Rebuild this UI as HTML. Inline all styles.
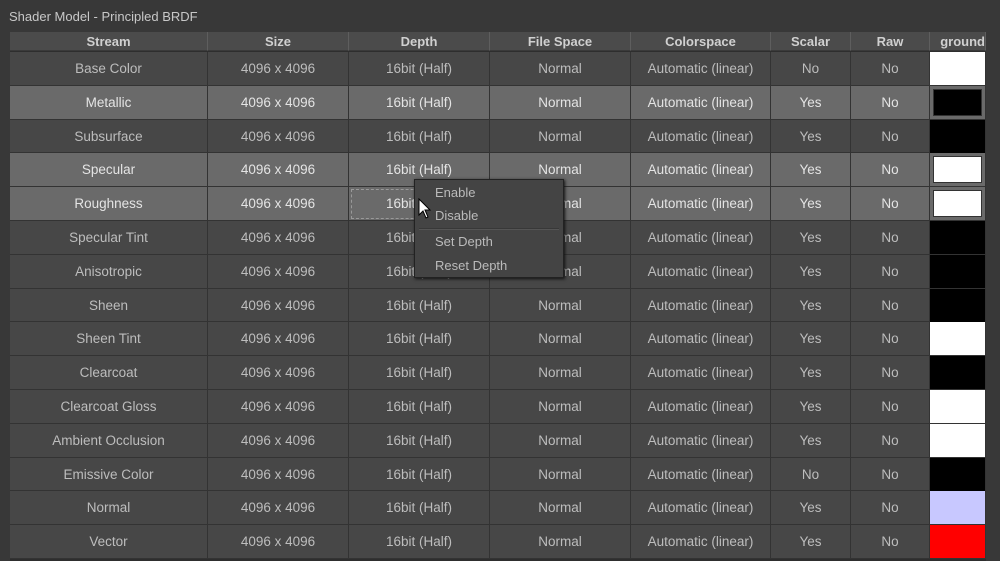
<!DOCTYPE html><html><head><style>
html,body{margin:0;width:1000px;height:561px;overflow:hidden}
body{background:#383838;font-family:"Liberation Sans","DejaVu Sans",sans-serif;position:relative}
.t{position:absolute;left:9px;top:9px;color:#c8c8c8;font-size:13px}
.tb{position:absolute;left:10px;top:32px;width:976px;height:529px;background:#2e2e2e}
.h,.r{position:absolute;left:0;height:20px;display:flex}
.h div{height:19px;line-height:19px;background:#4b4b4b;color:#d0d0d0;font-weight:bold;font-size:13px;text-align:center;border-right:1px solid #5e5e5e;box-sizing:border-box;border-bottom:1px solid #3a3a3a;overflow:hidden;white-space:nowrap}
.r{height:33.8px}
.r div{box-sizing:border-box;border-right:1px solid #333;border-bottom:1px solid #333;background:#474747;color:#bdbdbd;font-size:13.5px;line-height:33px;text-align:center;white-space:nowrap}
.r.s div{background:#6a6a6a;color:#e4e4e4}
.r div.sw{padding:0}
.r.s div.sw i{display:block;margin:3px 3px;height:25px;border:1px solid #333}
.r:not(.s) div.sw i{display:block;height:33px}
.c0{width:198px}.c1{width:141px}.c2{width:141px}.c3{width:141px}.c4{width:140px}.c5{width:80px}.c6{width:79px}.c7{width:56px}
.menu{position:absolute;left:414px;top:179px;width:148px;height:97px;background:#444;border:1px solid #222;box-shadow:1px 1px 3px #111;color:#bbb;font-size:13px}
.menu span{position:absolute;left:20px}
</style></head><body>
<div class="t">Shader Model - Principled BRDF</div>
<div class="tb">
<div class="h" style="top:0"><div class="c0">Stream</div><div class="c1">Size</div><div class="c2">Depth</div><div class="c3">File Space</div><div class="c4">Colorspace</div><div class="c5">Scalar</div><div class="c6">Raw</div><div class="c7" style="text-align:right">ground</div></div>
<div class="r" style="top:20px"><div class="c0">Base Color</div><div class="c1">4096 x 4096</div><div class="c2">16bit (Half)</div><div class="c3">Normal</div><div class="c4">Automatic (linear)</div><div class="c5">No</div><div class="c6">No</div><div class="c7 sw"><i style="background:#fff"></i></div></div>
<div class="r s" style="top:53.8px"><div class="c0">Metallic</div><div class="c1">4096 x 4096</div><div class="c2">16bit (Half)</div><div class="c3">Normal</div><div class="c4">Automatic (linear)</div><div class="c5">Yes</div><div class="c6">No</div><div class="c7 sw"><i style="background:#000"></i></div></div>
<div class="r" style="top:87.6px"><div class="c0">Subsurface</div><div class="c1">4096 x 4096</div><div class="c2">16bit (Half)</div><div class="c3">Normal</div><div class="c4">Automatic (linear)</div><div class="c5">Yes</div><div class="c6">No</div><div class="c7 sw"><i style="background:#000"></i></div></div>
<div class="r s" style="top:121.4px"><div class="c0">Specular</div><div class="c1">4096 x 4096</div><div class="c2">16bit (Half)</div><div class="c3">Normal</div><div class="c4">Automatic (linear)</div><div class="c5">Yes</div><div class="c6">No</div><div class="c7 sw"><i style="background:#fff"></i></div></div>
<div class="r s" style="top:155.2px"><div class="c0">Roughness</div><div class="c1">4096 x 4096</div><div class="c2" style="outline:1px dashed #999;outline-offset:-3px">16bit (Half)</div><div class="c3">Normal</div><div class="c4">Automatic (linear)</div><div class="c5">Yes</div><div class="c6">No</div><div class="c7 sw"><i style="background:#fff"></i></div></div>
<div class="r" style="top:189px"><div class="c0">Specular Tint</div><div class="c1">4096 x 4096</div><div class="c2">16bit (Half)</div><div class="c3">Normal</div><div class="c4">Automatic (linear)</div><div class="c5">Yes</div><div class="c6">No</div><div class="c7 sw"><i style="background:#000"></i></div></div>
<div class="r" style="top:222.8px"><div class="c0">Anisotropic</div><div class="c1">4096 x 4096</div><div class="c2">16bit (Half)</div><div class="c3">Normal</div><div class="c4">Automatic (linear)</div><div class="c5">Yes</div><div class="c6">No</div><div class="c7 sw"><i style="background:#000"></i></div></div>
<div class="r" style="top:256.6px"><div class="c0">Sheen</div><div class="c1">4096 x 4096</div><div class="c2">16bit (Half)</div><div class="c3">Normal</div><div class="c4">Automatic (linear)</div><div class="c5">Yes</div><div class="c6">No</div><div class="c7 sw"><i style="background:#000"></i></div></div>
<div class="r" style="top:290.4px"><div class="c0">Sheen Tint</div><div class="c1">4096 x 4096</div><div class="c2">16bit (Half)</div><div class="c3">Normal</div><div class="c4">Automatic (linear)</div><div class="c5">Yes</div><div class="c6">No</div><div class="c7 sw"><i style="background:#fff"></i></div></div>
<div class="r" style="top:324.2px"><div class="c0">Clearcoat</div><div class="c1">4096 x 4096</div><div class="c2">16bit (Half)</div><div class="c3">Normal</div><div class="c4">Automatic (linear)</div><div class="c5">Yes</div><div class="c6">No</div><div class="c7 sw"><i style="background:#000"></i></div></div>
<div class="r" style="top:358px"><div class="c0">Clearcoat Gloss</div><div class="c1">4096 x 4096</div><div class="c2">16bit (Half)</div><div class="c3">Normal</div><div class="c4">Automatic (linear)</div><div class="c5">Yes</div><div class="c6">No</div><div class="c7 sw"><i style="background:#fff"></i></div></div>
<div class="r" style="top:391.8px"><div class="c0">Ambient Occlusion</div><div class="c1">4096 x 4096</div><div class="c2">16bit (Half)</div><div class="c3">Normal</div><div class="c4">Automatic (linear)</div><div class="c5">Yes</div><div class="c6">No</div><div class="c7 sw"><i style="background:#fff"></i></div></div>
<div class="r" style="top:425.6px"><div class="c0">Emissive Color</div><div class="c1">4096 x 4096</div><div class="c2">16bit (Half)</div><div class="c3">Normal</div><div class="c4">Automatic (linear)</div><div class="c5">No</div><div class="c6">No</div><div class="c7 sw"><i style="background:#000"></i></div></div>
<div class="r" style="top:459.4px"><div class="c0">Normal</div><div class="c1">4096 x 4096</div><div class="c2">16bit (Half)</div><div class="c3">Normal</div><div class="c4">Automatic (linear)</div><div class="c5">Yes</div><div class="c6">No</div><div class="c7 sw"><i style="background:#c8c8ff"></i></div></div>
<div class="r" style="top:493.2px"><div class="c0">Vector</div><div class="c1">4096 x 4096</div><div class="c2">16bit (Half)</div><div class="c3">Normal</div><div class="c4">Automatic (linear)</div><div class="c5">Yes</div><div class="c6">No</div><div class="c7 sw"><i style="background:#f00"></i></div></div>
</div>
<div class="menu">
<span style="top:5px">Enable</span>
<span style="top:28px">Disable</span>
<div style="position:absolute;left:4px;right:4px;top:48px;border-top:1px solid #383838;border-bottom:1px solid #555"></div>
<span style="top:54px">Set Depth</span>
<span style="top:78px">Reset Depth</span>
</div>
<svg style="position:absolute;left:418px;top:198px" width="14" height="22" viewBox="0 0 14 22"><path d="M1 1 L1 17 L5 13 L8 20 L10 19 L7 12 L12 12 Z" fill="#fff" stroke="#000" stroke-width="1"/></svg>
</body></html>
